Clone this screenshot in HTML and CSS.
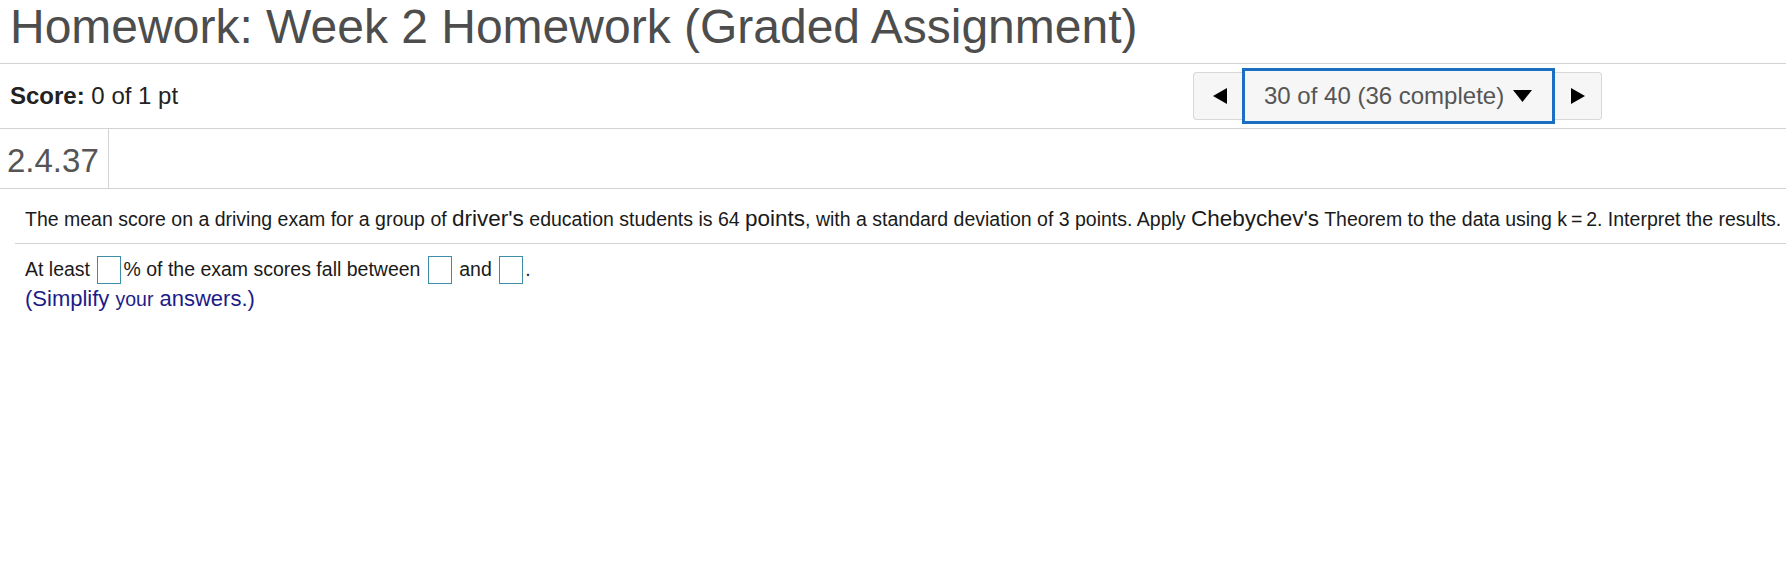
FILE: index.html
```html
<!DOCTYPE html>
<html lang="en">
<head>
    <meta charset="UTF-8">
    <title>Homework: Week 2 Homework (Graded Assignment)</title>
    <link rel="stylesheet" href="styles.css">
</head>
<body>
    <div class="title-bar">
        <h1>Homework: Week 2 Homework (Graded Assignment)</h1>
    </div>

    <div class="score-bar">
        <div class="score"><b>Score:</b> 0 of 1 pt</div>
        <div class="nav">
            <button class="nav-btn prev" type="button">
                <svg width="14" height="16" viewBox="0 0 14 16"><polygon points="14,0 14,16 0,8" fill="#000"/></svg>
            </button>
            <button class="nav-select" type="button">
                <span>30 of 40 (36 complete)</span>
                <svg width="19" height="12" viewBox="0 0 19 12"><polygon points="0,0 19,0 9.5,12" fill="#000"/></svg>
            </button>
            <button class="nav-btn next" type="button">
                <svg width="14" height="16" viewBox="0 0 14 16"><polygon points="0,0 14,8 0,16" fill="#000"/></svg>
            </button>
        </div>
    </div>

    <div class="qnum-bar">
        <span class="qnum">2.4.37</span>
    </div>

    <div class="question">
        <p class="stem">The mean score on a driving exam for a group of <span class="big">driver's</span> education students is 64 <span class="big">points</span>, with a standard deviation of 3 points. Apply <span class="big">Chebychev's</span> Theorem to the data using k&#8201;=&#8201;2. Interpret the results.</p>
        <div class="answer">
            <p class="fill">At least <span class="blank"></span>% of the exam scores fall between <span class="blank"></span> and <span class="blank"></span>.</p>
            <p class="hint">(Simplify <span class="small">your</span> answers.)</p>
        </div>
    </div>
</body>
</html>
```

FILE: styles.css
```css
body {
    margin: 0;
    background: #ffffff;
    font-family: "Liberation Sans", Arial, sans-serif;
    color: #1a1a1a;
}
.title-bar {
    height: 63px;
    padding-left: 10px;
    border-bottom: 1px solid #d3d3d3;
}
h1 {
    margin: 0;
    font-size: 48px;
    font-weight: normal;
    line-height: 54px;
    color: #4d4d4d;
}
.score-bar {
    height: 64px;
    display: flex;
    align-items: center;
    justify-content: space-between;
    padding: 0 184px 0 10px;
    border-bottom: 1px solid #d3d3d3;
}
.score {
    font-size: 24px;
    color: #222;
}
.nav {
    display: flex;
    align-items: center;
}
.nav button {
    font-family: inherit;
    margin: 0;
    cursor: pointer;
}
.nav-btn {
    width: 49px;
    height: 48px;
    display: flex;
    align-items: center;
    justify-content: center;
    background: #f6f6f6;
    border: 1px solid #d8d8d8;
    padding: 0;
}
.nav-btn.prev {
    border-radius: 4px 0 0 4px;
    border-right: none;
    padding-left: 4px;
}
.nav-btn.next {
    width: 47px;
    border-radius: 0 4px 4px 0;
    border-left: none;
}
.nav-select {
    width: 313px;
    height: 56px;
    display: flex;
    align-items: center;
    gap: 9px;
    padding: 0 0 0 19px;
    background: #f6f6f6;
    border: 3px solid #1a6fc2;
    font-size: 24px;
    color: #555;
}
.qnum-bar {
    height: 59px;
    display: flex;
    border-bottom: 1px solid #d3d3d3;
}
.qnum {
    width: 101px;
    padding: 4px 0 0 7px;
    font-size: 33px;
    line-height: 55px;
    color: #555;
    border-right: 1px solid #d3d3d3;
}
.question {
    padding-left: 15px;
}
.stem {
    margin: 0;
    padding: 18px 0 12px 10px;
    font-size: 19.5px;
    line-height: 24px;
    border-bottom: 1px solid #d3d3d3;
    white-space: nowrap;
}
.stem .big {
    font-size: 22.5px;
}
.answer {
    padding: 10px 0 0 10px;
}
.answer p {
    margin: 0;
    line-height: 30px;
}
.fill {
    font-size: 19.5px;
}
.blank {
    display: inline-block;
    width: 24px;
    height: 28px;
    box-sizing: border-box;
    margin: 0 2px;
    border: 1px solid #3d8ca8;
    vertical-align: -8px;
}
.hint {
    font-size: 22px;
    color: #1c1c88;
}
.hint .small {
    font-size: 19.5px;
}
```
